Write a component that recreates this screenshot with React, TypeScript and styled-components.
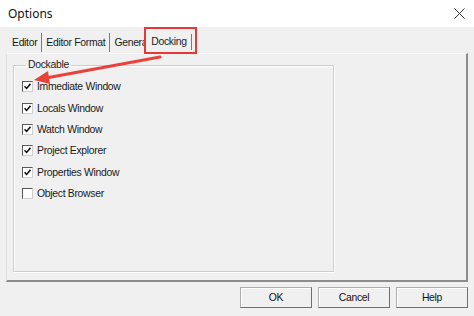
import React from "react";
import styled, { createGlobalStyle } from "styled-components";

const GlobalStyle = createGlobalStyle`
  html, body {
    margin: 0;
    padding: 0;
    background: #ffffff;
  }
`;

const Window = styled.div`
  position: relative;
  width: 474px;
  height: 316px;
  display: flex;
  flex-direction: column;
  background: #f0f0f0;
  font-family: "Liberation Sans", Arial, sans-serif;
  font-size: 10.4px;
  letter-spacing: -0.3px;
  color: #1a1a1a;
  overflow: hidden;
`;

const TitleBar = styled.div`
  height: 27px;
  flex: none;
  display: flex;
  align-items: center;
  justify-content: space-between;
  padding: 0 9px 0 8px;
  background: #ffffff;
  font-family: "Noto Sans", sans-serif;
  font-size: 12px;
  letter-spacing: 0;
  color: #111;
`;

const Body = styled.div`
  flex: 1;
  display: flex;
  flex-direction: column;
  padding: 0 6px 0 6px;
`;

const TabStrip = styled.div`
  height: 26px;
  display: flex;
  align-items: flex-end;
  padding-left: 2px;
`;

const Tab = styled.div<{ $sep?: boolean }>`
  height: 19px;
  display: flex;
  align-items: center;
  padding: ${(p) => (p.$sep ? "0 4px" : "0 2px 0 4px")};
  margin-bottom: 1px;
  border-right: ${(p) => (p.$sep ? "1px solid #7a7a7a" : "none")};
  box-sizing: border-box;
  white-space: nowrap;
`;

const ActiveTab = styled.div`
  position: relative;
  height: 25px;
  margin-left: -4px;
  padding: 2px 4px 0 6px;
  display: flex;
  align-items: center;
  box-sizing: border-box;
  outline: 2px solid #e53935;
  outline-offset: -1px;
  background: #f0f0f0;
  white-space: nowrap;
`;

const TabLabel = styled.span`
  padding-right: 4px;
  border-right: 1px solid #7a7a7a;
  line-height: 16px;
`;

const Panel = styled.div`
  height: 229px;
  border-top: 1px solid #fafafa;
  border-left: 1px solid #e2e2e2;
  border-right: 2px solid #8c8c8c;
  border-bottom: 2px solid #8c8c8c;
  padding: 5px 0 0 6px;
  box-sizing: border-box;
`;

const GroupBox = styled.fieldset`
  margin: 0;
  width: 321px;
  height: 213px;
  box-sizing: border-box;
  border: 1px solid #cdcdcd;
  box-shadow: inset 1px 1px 0 #ffffff, 1px 1px 0 #ffffff;
  padding: 5px 0 0 8px;
`;

const Legend = styled.legend`
  padding: 0 2px;
  margin-left: 4px;
  line-height: 12px;
`;

const Row = styled.label`
  height: 21.4px;
  display: flex;
  align-items: center;
  gap: 4px;
`;

const Box = styled.span`
  width: 11px;
  height: 11px;
  box-sizing: border-box;
  border: 1px solid #5a5a5a;
  border-right-color: #cfcfcf;
  border-bottom-color: #cfcfcf;
  background: #ffffff;
  display: flex;
  align-items: center;
  justify-content: center;
`;

const ButtonRow = styled.div`
  display: flex;
  justify-content: flex-end;
  gap: 6px;
  padding-top: 5px;
`;

const Button = styled.button`
  width: 72px;
  height: 21px;
  font-family: "Liberation Sans", Arial, sans-serif;
  font-size: 10.4px;
  letter-spacing: -0.3px;
  color: #111;
  background: #f0f0f0;
  border: 1px solid #adadad;
  border-right-color: #6f6f6f;
  border-bottom-color: #6f6f6f;
  box-shadow: inset 1px 1px 0 #ffffff;
  padding: 0;
`;

const Overlay = styled.svg`
  position: absolute;
  left: 0;
  top: 0;
  pointer-events: none;
`;

const items: [string, boolean][] = [
  ["Immediate Window", true],
  ["Locals Window", true],
  ["Watch Window", true],
  ["Project Explorer", true],
  ["Properties Window", true],
  ["Object Browser", false],
];

const Check = () => (
  <svg width="7" height="7" viewBox="0 0 7 7">
    <path d="M0.5 3.2 L2.6 5.4 L6.5 0.8" fill="none" stroke="#111" strokeWidth="1.6" />
  </svg>
);

export default function App() {
  return (
    <Window>
      <GlobalStyle />
      <TitleBar>
        <span>Options</span>
        <svg width="11" height="11" viewBox="0 0 11 11">
          <path d="M0.5 0.5 L10.5 10.5 M10.5 0.5 L0.5 10.5" stroke="#333" strokeWidth="1" />
        </svg>
      </TitleBar>
      <Body>
        <TabStrip>
          <Tab $sep>Editor</Tab>
          <Tab $sep>Editor Format</Tab>
          <Tab>Genera</Tab>
          <ActiveTab>
            <TabLabel>Docking</TabLabel>
          </ActiveTab>
        </TabStrip>
        <Panel>
          <GroupBox>
            <Legend>Dockable</Legend>
            {items.map(([label, on]) => (
              <Row key={label}>
                <Box>{on && <Check />}</Box>
                {label}
              </Row>
            ))}
          </GroupBox>
        </Panel>
        <ButtonRow>
          <Button>OK</Button>
          <Button>Cancel</Button>
          <Button>Help</Button>
        </ButtonRow>
      </Body>
      <Overlay width="474" height="316">
        <line x1="160" y1="57" x2="46" y2="78" stroke="#e8423b" strokeWidth="3" strokeLinecap="round" />
        <polygon points="34,80 48,71 50,84" fill="#e8423b" />
      </Overlay>
    </Window>
  );
}
